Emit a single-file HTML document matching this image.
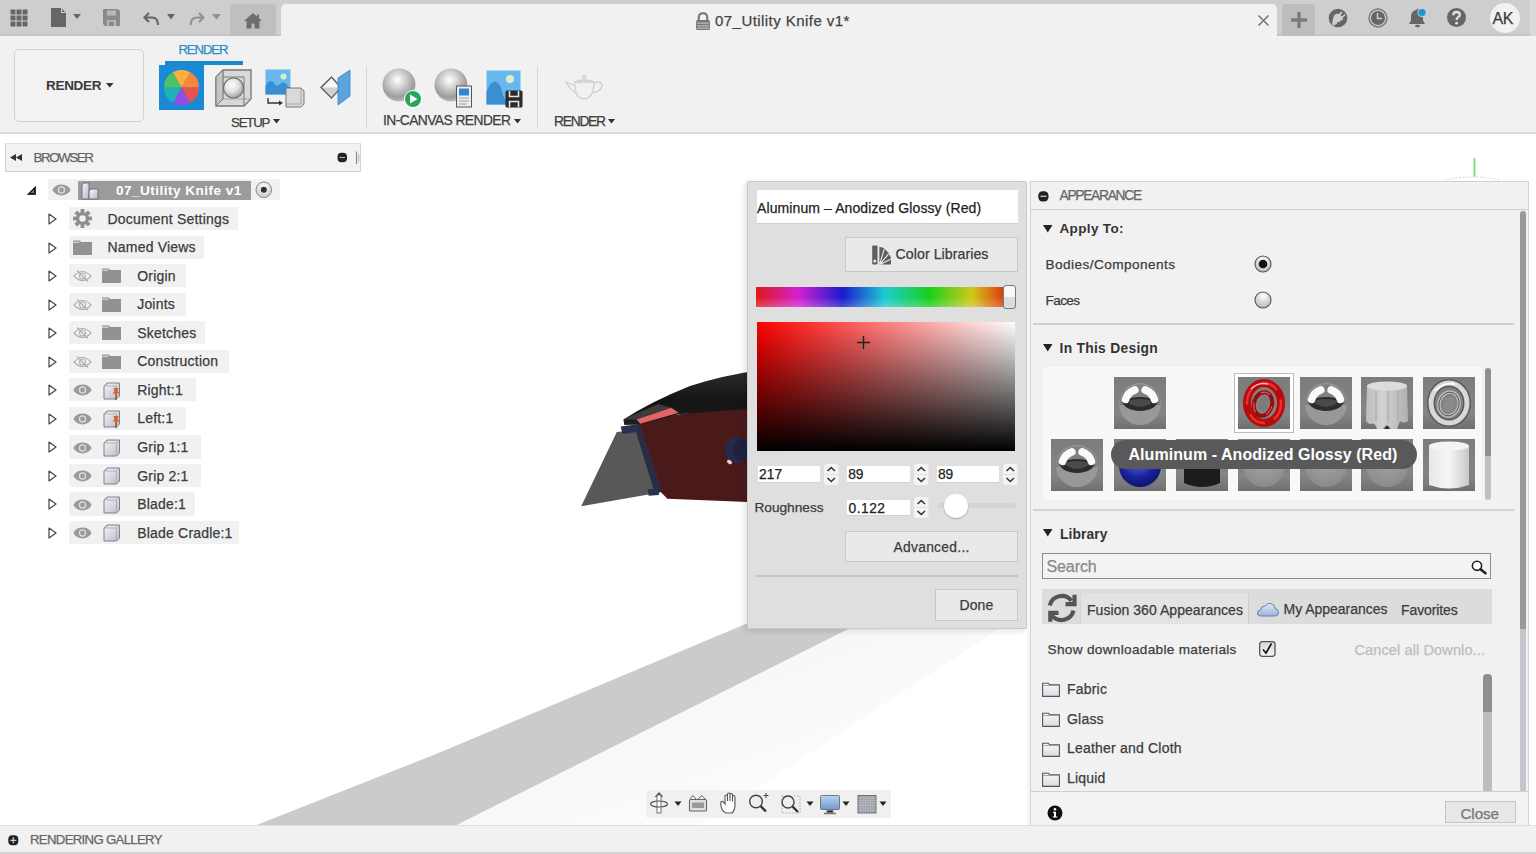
<!DOCTYPE html>
<html><head><meta charset="utf-8">
<style>
*{box-sizing:border-box}
html,body{margin:0;padding:0;width:1536px;height:854px;overflow:hidden;background:#fff;font-family:"Liberation Sans",sans-serif;}
.a{position:absolute}
.t{position:absolute;white-space:nowrap;line-height:1;color:#3c3c3c;-webkit-text-stroke:0.25px currentColor}
svg{position:absolute;overflow:visible}
.t[style*="bold"]{-webkit-text-stroke:0}
</style></head><body>

<!-- ===== TOP BAR ===== -->
<div class="a" style="left:0;top:0;width:1536px;height:36px;background:#cecece;border-bottom:2px solid #c4c4c4"></div>
<div class="a" style="left:1530px;top:0;width:6px;height:36px;background:#d9d9d9"></div>
<!-- home btn -->
<div class="a" style="left:230px;top:4px;width:46px;height:32px;background:#bfbfbf;border-radius:4px 4px 0 0"></div>
<!-- doc tab -->
<div class="a" style="left:281px;top:4px;width:996px;height:34px;background:#f1f1f1;border-radius:5px 5px 0 0"></div>
<!-- plus btn -->
<div class="a" style="left:1282px;top:4px;width:33px;height:32px;background:#bdbdbd;border-radius:4px 4px 0 0"></div>


<!-- grid icon -->
<svg style="left:10px;top:9px" width="18" height="18" viewBox="0 0 18 18"><g fill="#666">
<rect x="0.5" y="0.5" width="5" height="5"/><rect x="6.5" y="0.5" width="5" height="5"/><rect x="12.5" y="0.5" width="5" height="5"/>
<rect x="0.5" y="6.5" width="5" height="5"/><rect x="6.5" y="6.5" width="5" height="5"/><rect x="12.5" y="6.5" width="5" height="5"/>
<rect x="0.5" y="12.5" width="5" height="5"/><rect x="6.5" y="12.5" width="5" height="5"/><rect x="12.5" y="12.5" width="5" height="5"/></g></svg>
<!-- file icon -->
<svg style="left:51px;top:8px" width="32" height="20" viewBox="0 0 32 20"><path d="M0 0H10L15 5V19H0Z" fill="#666"/><path d="M10 0V5H15" fill="#cfcfcf"/><path d="M11 1V4H14Z" fill="#666"/><path d="M22 6H30L26 11Z" fill="#666"/></svg>
<!-- save icon -->
<svg style="left:103px;top:9px" width="18" height="18" viewBox="0 0 18 18"><path d="M0 1Q0 0 1 0H15L17 2V17H2L0 15Z" fill="#8a8a8a"/><rect x="4" y="1.5" width="9" height="5" fill="#b9b9b9"/><rect x="4" y="11" width="9" height="6" fill="#b9b9b9"/><rect x="6" y="12.5" width="5" height="4.5" fill="#8a8a8a"/></svg>
<!-- undo -->
<svg style="left:143px;top:11px" width="34" height="16" viewBox="0 0 34 16"><path d="M6 2L1.5 6.5L6 11" fill="none" stroke="#666" stroke-width="2.2"/><path d="M2 6.5H9Q15 6.5 15 14" fill="none" stroke="#666" stroke-width="2.2"/><path d="M24 3H32L28 8.5Z" fill="#666"/></svg>
<!-- redo -->
<svg style="left:189px;top:11px" width="34" height="16" viewBox="0 0 34 16"><path d="M10 2L14.5 6.5L10 11" fill="none" stroke="#8f8f8f" stroke-width="2"/><path d="M14 6.5H8Q2 6.5 1.5 14" fill="none" stroke="#8f8f8f" stroke-width="2"/><path d="M23 3H32L27.5 8.5Z" fill="#8f8f8f"/></svg>
<!-- home icon -->
<svg style="left:244px;top:13px" width="18" height="16" viewBox="0 0 18 16"><path d="M9 0L0 8H2.5V15.5H7.5V10.5H10.5V15.5H15.5V8H18L15 5.3V1.5H13V3.6Z" fill="#6e6e6e"/></svg>
<!-- lock -->
<svg style="left:694.5px;top:11.5px" width="16" height="18" viewBox="0 0 15 17" preserveAspectRatio="none"><path d="M3.5 8V5.5Q3.5 1.2 7.5 1.2Q11.5 1.2 11.5 5.5V8" fill="none" stroke="#777" stroke-width="2"/><rect x="1" y="7.5" width="13" height="9.5" rx="1.5" fill="#777"/><g stroke="#c8c8c8" stroke-width="1"><line x1="2" y1="10.5" x2="13" y2="10.5"/><line x1="2" y1="13" x2="13" y2="13"/><line x1="2" y1="15.2" x2="13" y2="15.2"/></g></svg>
<div class="t" style="left:715px;top:12.5px;font-size:15px;color:#444;letter-spacing:0.45px">07_Utility Knife v1*</div>
<!-- close x -->
<svg style="left:1258px;top:15px" width="11" height="11" viewBox="0 0 11 11"><path d="M0.5 0.5L10.5 10.5M10.5 0.5L0.5 10.5" stroke="#777" stroke-width="1.6"/></svg>
<!-- plus -->
<svg style="left:1291px;top:12px" width="16" height="16" viewBox="0 0 16 16"><path d="M8 0V16M0 8H16" stroke="#7b7b7b" stroke-width="3.4"/></svg>
<!-- extension icon -->
<svg style="left:1328px;top:8px" width="20" height="20" viewBox="0 0 20 20"><circle cx="10" cy="10" r="9.3" fill="#666"/><path d="M5 11Q6 5 11 6L13 3.5L14.5 4.5L12.5 7L14 8.5L16.5 6L17.5 7.2L15 9.5Q15.5 14 9.5 15.5L5.5 17.5L4 16Z" fill="#cecece"/><path d="M9 15Q13 15 14 12" stroke="#666" fill="none" stroke-width="1.4"/></svg>
<!-- clock -->
<svg style="left:1368px;top:8px" width="20" height="20" viewBox="0 0 20 20"><circle cx="10" cy="10" r="9" fill="none" stroke="#777" stroke-width="1.4"/><circle cx="10" cy="10" r="7" fill="#666"/><path d="M9.5 5V10.5H14" fill="none" stroke="#d0d0d0" stroke-width="1.4"/></svg>
<!-- bell -->
<svg style="left:1409px;top:8px" width="20" height="20" viewBox="0 0 20 20"><path d="M8 1.5Q8 0.5 8.8 0.5Q9.6 0.5 9.6 1.5Q14 3 14 8V12.5L16 16H0L2 12.5V8Q2 3 8 1.5Z" fill="#666"/><ellipse cx="8.5" cy="18" rx="2.5" ry="1.3" fill="#666"/><circle cx="13" cy="4.5" r="4.5" fill="#cecece"/><circle cx="13" cy="4.5" r="3.6" fill="#1f96d8"/></svg>
<!-- help -->
<svg style="left:1447px;top:8px" width="20" height="20" viewBox="0 0 20 20"><circle cx="9.5" cy="9.5" r="9.5" fill="#666"/><path d="M6.3 7.3Q6.3 4 9.6 4Q12.8 4 12.8 6.8Q12.8 8.5 10.8 9.5Q9.6 10.2 9.6 12" fill="none" stroke="#e0e0e0" stroke-width="2.3"/><circle cx="9.6" cy="15.2" r="1.4" fill="#e0e0e0"/></svg>
<!-- avatar -->
<div class="a" style="left:1490px;top:3px;width:30px;height:30px;border-radius:50%;background:#f2f2f2"></div>
<div class="t" style="left:1492.5px;top:10.5px;font-size:16px;color:#3a3a3a;letter-spacing:-0.4px">AK</div>

<!-- ===== TOOLBAR ===== -->
<div class="a" style="left:0;top:36px;width:1536px;height:98px;background:#f1f1f1;border-bottom:2px solid #dcdcdc"></div>


<!-- RENDER box -->
<div class="a" style="left:14px;top:49px;width:130px;height:73px;border:1.5px solid #d2d2d2;border-radius:5px;background:#f2f2f2"></div>
<div class="t" style="left:46px;top:78.5px;font-size:13.5px;font-weight:bold;color:#3a3a3a;letter-spacing:-0.3px">RENDER</div>
<svg style="left:106px;top:83px" width="8" height="5" viewBox="0 0 8 5"><path d="M0 0H7.5L3.75 4.5Z" fill="#333"/></svg>
<!-- RENDER tab label -->
<div class="t" style="left:178.5px;top:43.2px;font-size:13.2px;color:#2b8fc6;letter-spacing:-1.15px">RENDER</div>
<div class="a" style="left:165px;top:61px;width:78px;height:3.5px;background:#1b88cc"></div>
<!-- color wheel btn -->
<div class="a" style="left:159px;top:65px;width:45px;height:45px;background:#1a8ad4"></div>
<svg style="left:163px;top:69px" width="37" height="37" viewBox="-18.5 -18.5 37 37">
<path d="M0 0L-8.75 -15.16A17.5 17.5 0 0 1 8.75 -15.16Z" fill="#fbb03b"/>
<path d="M0 0L8.75 -15.16A17.5 17.5 0 0 1 17.5 0Z" fill="#f7873a"/>
<path d="M0 0L17.5 0A17.5 17.5 0 0 1 8.75 15.16Z" fill="#e8524a"/>
<path d="M0 0L8.75 15.16A17.5 17.5 0 0 1 -8.75 15.16Z" fill="#8d4fe6"/>
<path d="M0 0L-8.75 15.16A17.5 17.5 0 0 1 -17.5 0Z" fill="#1fb3b8"/>
<path d="M0 0L-17.5 0A17.5 17.5 0 0 1 -8.75 -15.16Z" fill="#4fc063"/>
</svg>
<!-- box w/ sphere -->
<svg style="left:215px;top:69px" width="37" height="38" viewBox="0 0 37 38">
<defs><radialGradient id="sph" cx="0.4" cy="0.35" r="0.7"><stop offset="0" stop-color="#ffffff"/><stop offset="0.5" stop-color="#e0e0e0"/><stop offset="1" stop-color="#9a9a9a"/></radialGradient></defs>
<path d="M1 8L8 1H36V30L29 37H1Z" fill="#d8d8d8" stroke="#777" stroke-width="1.3"/>
<path d="M8 1V30H36M1 37L8 30" fill="none" stroke="#999" stroke-width="0.8"/>
<path d="M1 8H29V37" fill="none" stroke="#777" stroke-width="1"/>
<path d="M1 8L8 1V30L1 37Z" fill="#c4c4c4" stroke="#777" stroke-width="1"/>
<circle cx="18.5" cy="19" r="10" fill="url(#sph)" stroke="#666" stroke-width="1.1"/>
</svg>
<!-- image + cube -->
<svg style="left:265px;top:69px" width="40" height="39" viewBox="0 0 40 39">
<rect x="0.5" y="0.5" width="25" height="25" fill="#68b8ef"/>
<path d="M0.5 25.5V17Q5 9 9 14Q12 19 15 15Q19 11 22 16Q24 19 25.5 18V25.5Z" fill="#3a8fd0"/>
<circle cx="18.5" cy="7.5" r="3" fill="#d9ecd0"/>
<path d="M21 19H36L39 22V35L36 38H21Z" fill="#dadada" stroke="#777" stroke-width="1"/>
<path d="M36 19V35H21" fill="none" stroke="#999" stroke-width="0.8"/>
<path d="M3 29V34H15" fill="none" stroke="#333" stroke-width="1.4"/><path d="M14 31.5L18 34L14 36.5Z" fill="#333"/>
</svg>
<!-- diamond + plane -->
<svg style="left:320px;top:69px" width="31" height="38" viewBox="0 0 31 38">
<path d="M1 18.5L11.5 8L21 18.5L11.5 29Z" fill="#f8f8f8" stroke="#666" stroke-width="1.2"/>
<path d="M1 18.5H21L11.5 29Z" fill="#d0d0d0"/>
<path d="M1 18.5L11.5 8L21 18.5L11.5 29Z" fill="none" stroke="#666" stroke-width="1.2"/>
<path d="M18 9L30 1V27L18 36Z" fill="#5aa4e0" stroke="#3a84c4" stroke-width="0.8"/>
</svg>
<div class="t" style="left:231px;top:115.5px;font-size:13.2px;color:#3f3f3f;letter-spacing:-1.15px">SETUP</div>
<svg style="left:273px;top:119px" width="8" height="5" viewBox="0 0 8 5"><path d="M0 0H7L3.5 4.5Z" fill="#333"/></svg>
<div class="a" style="left:366px;top:67px;width:1px;height:61px;background:#d6d6d6"></div>
<!-- in-canvas spheres -->
<svg style="left:382px;top:68px" width="42" height="42" viewBox="0 0 42 42">
<defs><radialGradient id="sp2" cx="0.45" cy="0.35" r="0.65"><stop offset="0" stop-color="#ffffff"/><stop offset="0.35" stop-color="#d5d5d5"/><stop offset="0.8" stop-color="#9c9c9c"/><stop offset="1" stop-color="#bdbdbd"/></radialGradient></defs>
<circle cx="17" cy="17" r="16.5" fill="url(#sp2)"/>
<circle cx="31" cy="31" r="9" fill="#fff"/><circle cx="31" cy="31" r="8" fill="#27a55a"/><path d="M28 26.5L35.5 31L28 35.5Z" fill="#fff"/>
</svg>
<svg style="left:434px;top:68px" width="42" height="42" viewBox="0 0 42 42">
<circle cx="17" cy="17" r="16.5" fill="url(#sp2)"/>
<rect x="22.5" y="18" width="15" height="21" fill="#eee" stroke="#555" stroke-width="1"/>
<rect x="25" y="20.5" width="10" height="7" fill="#2e86d6"/>
<path d="M25 30H35M25 33H35M25 36H33" stroke="#888" stroke-width="0.8"/>
</svg>
<svg style="left:486px;top:70px" width="38" height="38" viewBox="0 0 38 38">
<rect x="0.5" y="0.5" width="34" height="34" fill="#68b8ef"/>
<path d="M0.5 34.5V22Q5 10 10 12Q15 14 17 25Q18 30 22 30V34.5Z" fill="#3a8fd0"/>
<circle cx="24" cy="9" r="4" fill="#dfefc8"/>
<rect x="19.5" y="20.5" width="17" height="17" rx="1.5" fill="#2b2b2b"/>
<path d="M23.5 21V26.5H32.5V21" fill="none" stroke="#e6e6e6" stroke-width="1.6"/>
<path d="M23.5 37V31.5H32.5V37" fill="none" stroke="#e6e6e6" stroke-width="1.6"/>
</svg>
<div class="t" style="left:383px;top:114.3px;font-size:13.8px;color:#3f3f3f;letter-spacing:-0.55px">IN-CANVAS RENDER</div>
<svg style="left:514px;top:119px" width="8" height="5" viewBox="0 0 8 5"><path d="M0 0H7L3.5 4.5Z" fill="#333"/></svg>
<div class="a" style="left:537px;top:67px;width:1px;height:61px;background:#d6d6d6"></div>
<!-- teapot -->
<svg style="left:565px;top:74px" width="40" height="26" viewBox="0 0 40 26">
<g fill="none" stroke="#cfcfcf" stroke-width="1.3">
<path d="M10 8Q9 24 19 25Q29 24 29 8Z"/><path d="M10 8Q19 4 29 8"/><circle cx="19.5" cy="3" r="1.5"/>
<path d="M29 9Q37 6 37 12Q36 17 28 19"/><path d="M10 12Q3 9 1 8Q5 16 11 19"/></g></svg>
<div class="t" style="left:554px;top:114.5px;font-size:13.8px;color:#3f3f3f;letter-spacing:-1.25px">RENDER</div>
<svg style="left:608px;top:119px" width="8" height="5" viewBox="0 0 8 5"><path d="M0 0H7L3.5 4.5Z" fill="#333"/></svg>



<!-- ===== CANVAS ===== -->
<svg style="left:0;top:0" width="1536" height="854" viewBox="0 0 1536 854">
<defs>
<linearGradient id="shfade" x1="0" y1="0" x2="1" y2="0.3"><stop offset="0" stop-color="#f4f4f4" stop-opacity="0"/><stop offset="1" stop-color="#f2f2f2" stop-opacity="1"/></linearGradient>
</defs>
<!-- faint wide shadow -->
<linearGradient id="fsh" x1="0" y1="0" x2="1" y2="1"><stop offset="0" stop-color="#f3f3f3"/><stop offset="1" stop-color="#ffffff"/></linearGradient><path d="M456.7 825L848.3 629L1000 628L700 825Z" fill="url(#fsh)"/>
<path d="M256.7 825L436 754L748 623L900 560L1000 520L900 600L848.3 629L456.7 825Z" fill="#cbcbcb"/>
</svg>
<!-- knife -->
<svg style="left:0;top:0" width="760" height="560" viewBox="0 0 760 560">
<defs>
<linearGradient id="grip" x1="0" y1="0" x2="0" y2="1"><stop offset="0" stop-color="#2e2e2e"/><stop offset="0.55" stop-color="#141414"/><stop offset="1" stop-color="#1c1c1c"/></linearGradient>
</defs>
<path d="M581.2 506.2L616.8 432.1L636 430L657 493Z" fill="#585858"/>
<path d="M636 421L760 402V502.4L667.4 498.7L660 491.2Z" fill="#4a1a1a"/>
<path d="M623.4 419.6Q650 402 690 386Q720 376 760 370V408L678.7 414.3L640.3 424.5L624.3 425Z" fill="url(#grip)"/>
<path d="M623.4 419.6L658 404L671.2 407.8L636.5 419.6Z" fill="#3c3c3c"/>
<path d="M636.5 419.6L671.2 407.8L678.7 412.8L640.3 423.7Z" fill="#e26464"/>
<path d="M633.7 424.6L640.3 424.6L661.8 491.2L655.3 494.9Z" fill="#2a2c46"/>
<path d="M620.6 426.5L635.6 424.6L637.5 432.1L622.5 434Z" fill="#2c3050"/>
<path d="M647.8 489.3L658 488.4L659 494.9L648.7 495.8Z" fill="#2c3050"/>
<ellipse cx="737" cy="450" rx="12" ry="13" fill="#262a4a"/>
<ellipse cx="741" cy="450" rx="8" ry="11" fill="#1e2240"/>
<ellipse cx="729.5" cy="462" rx="2.8" ry="1.8" fill="#f0d0d0" transform="rotate(35 729.5 462)"/>
</svg>
<!-- axis gizmo -->
<svg style="left:1440px;top:150px" width="60" height="35" viewBox="0 0 60 35">
<path d="M34.5 8V27" stroke="#7ee07e" stroke-width="2"/>
<path d="M5 30Q34 24 60 30" fill="none" stroke="#ddd" stroke-width="1.2" stroke-dasharray="2 1.5"/>
</svg>
<!-- nav bar -->
<div class="a" style="left:646.4px;top:789.7px;width:244.3px;height:28.1px;background:#f0f0f0;border-radius:2px"></div>
<svg style="left:646px;top:789px" width="245" height="29" viewBox="0 0 245 29">
<defs><linearGradient id="mon" x1="0" y1="0" x2="0" y2="1"><stop offset="0" stop-color="#bcd4f0"/><stop offset="1" stop-color="#6e98d0"/></linearGradient></defs>
<!-- orbit -->
<path d="M13 4V24" stroke="#555" stroke-width="2.2"/><path d="M9.5 8L13 4L16.5 8" fill="none" stroke="#555" stroke-width="1.4"/>
<rect x="11" y="6" width="4" height="18" fill="#fff" stroke="#666" stroke-width="0.9"/>
<ellipse cx="13" cy="15" rx="8.5" ry="3" fill="none" stroke="#555" stroke-width="1.2"/>
<path d="M28.5 12.5H35.5L32 17Z" fill="#222"/>
<!-- camera/film -->
<rect x="43.5" y="10.5" width="17" height="11.5" rx="1" fill="#e0e0e0" stroke="#666" stroke-width="1.1"/>
<rect x="46" y="13.5" width="12" height="5.5" fill="#999"/>
<path d="M44 10L47 6.5L50 10M52 10L56 6.5L59 10" fill="none" stroke="#666" stroke-width="1"/>
<!-- hand -->
<path d="M77 22Q74 17 75 13Q76 11.5 77.5 13L79 15V7.5Q79 6 80.3 6Q81.5 6 81.5 7.5V12V5.5Q81.5 4 82.8 4Q84 4 84 5.5V12V6Q84 4.5 85.3 4.5Q86.5 4.5 86.5 6V12.5V8Q86.5 6.5 87.7 6.5Q89 6.5 89 8V16Q89 21 86 24H80Z" fill="#fff" stroke="#555" stroke-width="1.1"/>
<!-- zoom + -->
<circle cx="110" cy="12.5" r="6.3" fill="#e8f0f4" stroke="#444" stroke-width="1.4"/><path d="M114.5 17L120 22.5" stroke="#333" stroke-width="2.4"/><path d="M120 4V9M117.5 6.5H122.5" stroke="#444" stroke-width="1"/>
<!-- zoom window -->
<path d="M136 7H154V24H136Z" fill="none" stroke="#999" stroke-width="0.8" stroke-dasharray="1.5 1.5"/>
<circle cx="142" cy="13" r="6" fill="#e8f0f4" stroke="#444" stroke-width="1.4"/><path d="M146.5 17.5L152 23" stroke="#333" stroke-width="2.4"/>
<path d="M160.5 12.5H167.5L164 17Z" fill="#222"/>
<!-- monitor -->
<rect x="174.5" y="6.5" width="19" height="14" rx="1" fill="url(#mon)" stroke="#777" stroke-width="1"/><path d="M181 21.5V23.5H187V21.5M178 24.5H190" stroke="#777" stroke-width="1.3"/>
<path d="M196.5 12.5H203.5L200 17Z" fill="#222"/>
<!-- grid -->
<rect x="212" y="6.5" width="18" height="17.5" fill="#9aa0a8" stroke="#666" stroke-width="0.9"/>
<path d="M214.5 7V24M217 7V24M219.5 7V24M222 7V24M224.5 7V24M227 7V24M212 9H230M212 11.5H230M212 14H230M212 16.5H230M212 19H230M212 21.5H230" stroke="#c0c4cc" stroke-width="0.5"/>
<path d="M233.5 12.5H240.5L237 17Z" fill="#222"/>
</svg>
<!-- bottom bar -->

<!-- ===== BROWSER ===== -->
<div class="a" style="left:5px;top:143px;width:356px;height:29px;background:#f2f2f2;border:1px solid #d4d4d4;border-top-color:#e2e2e2"></div>
<svg style="left:10px;top:154px" width="13" height="7" viewBox="0 0 13 7"><path d="M0 3.5L6 0V7Z M6 3.5L12 0V7Z" fill="#333"/></svg>
<div class="t" style="left:33.5px;top:150.5px;font-size:13.4px;color:#666;letter-spacing:-1.45px">BROWSER</div>
<svg style="left:337px;top:152px" width="24" height="14" viewBox="0 0 24 14"><rect x="0.5" y="0.8" width="9.5" height="9.5" rx="4" fill="#222"/><rect x="2.5" y="4.9" width="5.5" height="1.2" fill="#aaa"/><path d="M19.5 -0.5V12" stroke="#888" stroke-width="1.1"/><path d="M21.7 2V9.5" stroke="#aaa" stroke-width="0.9"/></svg>
<!-- root row -->
<svg style="left:27px;top:186px" width="9" height="9" viewBox="0 0 9 9"><path d="M8.5 0.5V8.5H0.5Z" fill="#1a1a1a" stroke="#1a1a1a" stroke-width="0.8" stroke-linejoin="round"/><path d="M7 3.5V7H3.5Z" fill="#777"/></svg>
<div class="a" style="left:48px;top:178.8px;width:232px;height:21.5px;background:#f1f1f1"></div>
<div class="a" style="left:77.5px;top:181px;width:173px;height:18.5px;background:#9b9b9b"></div>


<svg width="0" height="0" style="position:absolute">
<defs>
<symbol id="tri" viewBox="0 0 9 12"><path d="M1 1L8 6L1 11Z" fill="none" stroke="#444" stroke-width="1.2" stroke-linejoin="round"/></symbol>
<symbol id="eye" viewBox="0 0 19 12"><path d="M0.3 6C4 -1.2 15 -1.2 18.7 6C15 13.2 4 13.2 0.3 6Z" fill="#9a9a9a"/><circle cx="9.5" cy="6" r="3.7" fill="#dedede"/><circle cx="9.5" cy="6" r="2.4" fill="#9a9a9a"/></symbol>
<symbol id="eyeoff" viewBox="0 0 19 12"><path d="M1 6Q9.5 -3 18 6Q9.5 15 1 6Z" fill="none" stroke="#b0b0b0" stroke-width="1.2"/><circle cx="9.5" cy="6" r="3" fill="none" stroke="#b0b0b0" stroke-width="1.1"/><path d="M4 0.5L15 11.5" stroke="#b0b0b0" stroke-width="1.3"/></symbol>
<symbol id="folder" viewBox="0 0 19 15"><path d="M0 0.5H7L8 2H19V15H0Z" fill="#8f8f8f"/><rect x="0" y="3" width="19" height="12" fill="#929292"/><path d="M0 2.2H6.5" stroke="#e8e8e8" stroke-width="1"/></symbol>
<symbol id="gear" viewBox="0 0 20 20"><g fill="#8f8f8f"><circle cx="10" cy="10" r="6.8"/>
<rect x="8" y="0" width="4" height="20"/><rect x="0" y="8" width="20" height="4"/><rect x="8" y="0" width="4" height="20" transform="rotate(45 10 10)"/><rect x="8" y="0" width="4" height="20" transform="rotate(-45 10 10)"/></g><circle cx="10" cy="10" r="3.4" fill="#f1f1f1"/></symbol>
<linearGradient id="cubeg" x1="0" y1="0" x2="1" y2="1"><stop offset="0" stop-color="#f4f6fa"/><stop offset="1" stop-color="#b8bcc6"/></linearGradient>
<symbol id="cube" viewBox="0 0 18 18"><path d="M1 4L4 1H16.5V14L13.5 17H1Z" fill="url(#cubeg)" stroke="#7e8088" stroke-width="1"/><path d="M4 1V4H1M4 4H13.5V17M13.5 4L16.5 1" fill="none" stroke="#a0a2aa" stroke-width="0.7"/></symbol>
<symbol id="cubepin" viewBox="0 0 18 18"><path d="M1 4L4 1H16.5V14L13.5 17H1Z" fill="url(#cubeg)" stroke="#7e8088" stroke-width="1"/><path d="M4 1V4H1M4 4H13.5V17" fill="none" stroke="#a0a2aa" stroke-width="0.7"/>
<path d="M10.5 6H15.5L14.5 9L16.5 11.5H9.5L11.5 9Z" fill="#d9622b"/><path d="M13 11.5V18" stroke="#8a3a1a" stroke-width="1.2"/></symbol>
</defs></svg>
<svg style="left:48px;top:213.0px" width="9" height="12"><use href="#tri"/></svg>
<div class="a" style="left:69.4px;top:207.0px;width:168.3px;height:23.4px;background:#f1f1f1"></div>
<svg style="left:72.5px;top:209.3px" width="19" height="19" viewBox="0 0 20 20"><use href="#gear" width="20" height="20"/></svg>
<div class="t" style="left:107.5px;top:211.8px;font-size:14px;color:#3c3c3c;letter-spacing:0.2px">Document Settings</div>
<svg style="left:48px;top:241.5px" width="9" height="12"><use href="#tri"/></svg>
<div class="a" style="left:69.4px;top:235.5px;width:134.6px;height:23.4px;background:#f1f1f1"></div>
<svg style="left:72.7px;top:239.8px" width="19" height="15" viewBox="0 0 19 15"><use href="#folder" width="19" height="15"/></svg>
<div class="t" style="left:107.5px;top:240.3px;font-size:14px;color:#3c3c3c;letter-spacing:0.2px">Named Views</div>
<svg style="left:48px;top:270.0px" width="9" height="12"><use href="#tri"/></svg>
<div class="a" style="left:69.4px;top:264.0px;width:117.0px;height:23.4px;background:#f1f1f1"></div>
<svg style="left:73px;top:270.0px" width="19" height="12" viewBox="0 0 19 12"><use href="#eyeoff" width="19" height="12"/></svg>
<svg style="left:102.3px;top:268.3px" width="19" height="15" viewBox="0 0 19 15"><use href="#folder" width="19" height="15"/></svg>
<div class="t" style="left:137.2px;top:268.8px;font-size:14px;color:#3c3c3c;letter-spacing:0.2px">Origin</div>
<svg style="left:48px;top:298.6px" width="9" height="12"><use href="#tri"/></svg>
<div class="a" style="left:69.4px;top:292.6px;width:117.0px;height:23.4px;background:#f1f1f1"></div>
<svg style="left:73px;top:298.6px" width="19" height="12" viewBox="0 0 19 12"><use href="#eyeoff" width="19" height="12"/></svg>
<svg style="left:102.3px;top:296.9px" width="19" height="15" viewBox="0 0 19 15"><use href="#folder" width="19" height="15"/></svg>
<div class="t" style="left:137.2px;top:297.4px;font-size:14px;color:#3c3c3c;letter-spacing:0.2px">Joints</div>
<svg style="left:48px;top:327.1px" width="9" height="12"><use href="#tri"/></svg>
<div class="a" style="left:69.4px;top:321.1px;width:135.6px;height:23.4px;background:#f1f1f1"></div>
<svg style="left:73px;top:327.1px" width="19" height="12" viewBox="0 0 19 12"><use href="#eyeoff" width="19" height="12"/></svg>
<svg style="left:102.3px;top:325.4px" width="19" height="15" viewBox="0 0 19 15"><use href="#folder" width="19" height="15"/></svg>
<div class="t" style="left:137.2px;top:325.9px;font-size:14px;color:#3c3c3c;letter-spacing:0.2px">Sketches</div>
<svg style="left:48px;top:355.6px" width="9" height="12"><use href="#tri"/></svg>
<div class="a" style="left:69.4px;top:349.6px;width:159.6px;height:23.4px;background:#f1f1f1"></div>
<svg style="left:73px;top:355.6px" width="19" height="12" viewBox="0 0 19 12"><use href="#eyeoff" width="19" height="12"/></svg>
<svg style="left:102.3px;top:353.9px" width="19" height="15" viewBox="0 0 19 15"><use href="#folder" width="19" height="15"/></svg>
<div class="t" style="left:137.2px;top:354.4px;font-size:14px;color:#3c3c3c;letter-spacing:0.2px">Construction</div>
<svg style="left:48px;top:384.1px" width="9" height="12"><use href="#tri"/></svg>
<div class="a" style="left:69.4px;top:378.1px;width:126.3px;height:23.4px;background:#f1f1f1"></div>
<svg style="left:72.8px;top:384.4px" width="19" height="12" viewBox="0 0 19 12"><use href="#eye" width="19" height="12"/></svg>
<svg style="left:103px;top:381.5px" width="18" height="18" viewBox="0 0 18 18"><use href="#cubepin" width="18" height="18"/></svg>
<div class="t" style="left:137.2px;top:382.9px;font-size:14px;color:#3c3c3c;letter-spacing:0.2px">Right:1</div>
<svg style="left:48px;top:412.6px" width="9" height="12"><use href="#tri"/></svg>
<div class="a" style="left:69.4px;top:406.6px;width:116.6px;height:23.4px;background:#f1f1f1"></div>
<svg style="left:72.8px;top:412.9px" width="19" height="12" viewBox="0 0 19 12"><use href="#eye" width="19" height="12"/></svg>
<svg style="left:103px;top:410.0px" width="18" height="18" viewBox="0 0 18 18"><use href="#cubepin" width="18" height="18"/></svg>
<div class="t" style="left:137.2px;top:411.4px;font-size:14px;color:#3c3c3c;letter-spacing:0.2px">Left:1</div>
<svg style="left:48px;top:441.2px" width="9" height="12"><use href="#tri"/></svg>
<div class="a" style="left:69.4px;top:435.2px;width:131.6px;height:23.4px;background:#f1f1f1"></div>
<svg style="left:72.8px;top:441.5px" width="19" height="12" viewBox="0 0 19 12"><use href="#eye" width="19" height="12"/></svg>
<svg style="left:103px;top:438.6px" width="18" height="18" viewBox="0 0 18 18"><use href="#cube" width="18" height="18"/></svg>
<div class="t" style="left:137.2px;top:440.0px;font-size:14px;color:#3c3c3c;letter-spacing:0.2px">Grip 1:1</div>
<svg style="left:48px;top:469.7px" width="9" height="12"><use href="#tri"/></svg>
<div class="a" style="left:69.4px;top:463.7px;width:131.6px;height:23.4px;background:#f1f1f1"></div>
<svg style="left:72.8px;top:470.0px" width="19" height="12" viewBox="0 0 19 12"><use href="#eye" width="19" height="12"/></svg>
<svg style="left:103px;top:467.1px" width="18" height="18" viewBox="0 0 18 18"><use href="#cube" width="18" height="18"/></svg>
<div class="t" style="left:137.2px;top:468.5px;font-size:14px;color:#3c3c3c;letter-spacing:0.2px">Grip 2:1</div>
<svg style="left:48px;top:498.2px" width="9" height="12"><use href="#tri"/></svg>
<div class="a" style="left:69.4px;top:492.2px;width:126.0px;height:23.4px;background:#f1f1f1"></div>
<svg style="left:72.8px;top:498.5px" width="19" height="12" viewBox="0 0 19 12"><use href="#eye" width="19" height="12"/></svg>
<svg style="left:103px;top:495.6px" width="18" height="18" viewBox="0 0 18 18"><use href="#cube" width="18" height="18"/></svg>
<div class="t" style="left:137.2px;top:497.0px;font-size:14px;color:#3c3c3c;letter-spacing:0.2px">Blade:1</div>
<svg style="left:48px;top:526.7px" width="9" height="12"><use href="#tri"/></svg>
<div class="a" style="left:69.4px;top:520.7px;width:169.3px;height:23.4px;background:#f1f1f1"></div>
<svg style="left:72.8px;top:527.0px" width="19" height="12" viewBox="0 0 19 12"><use href="#eye" width="19" height="12"/></svg>
<svg style="left:103px;top:524.1px" width="18" height="18" viewBox="0 0 18 18"><use href="#cube" width="18" height="18"/></svg>
<div class="t" style="left:137.2px;top:525.5px;font-size:14px;color:#3c3c3c;letter-spacing:0.2px">Blade Cradle:1</div>
<svg style="left:51.5px;top:184.3px" width="19" height="12" viewBox="0 0 19 12"><use href="#eye" width="19" height="12"/></svg>
<svg style="left:81px;top:181.5px" width="19" height="18" viewBox="0 0 19 18"><path d="M1 3L3 1H8V17H1Z" fill="url(#cubeg)" stroke="#6e7078" stroke-width="1"/><path d="M8 9L10 7H17V17H8Z" fill="url(#cubeg)" stroke="#6e7078" stroke-width="1"/></svg>
<div class="t" style="left:116px;top:183.6px;font-size:13.6px;font-weight:bold;color:#fff;letter-spacing:0.45px">07_Utility Knife v1</div>
<svg style="left:255px;top:181px" width="18" height="18" viewBox="0 0 18 18"><defs><radialGradient id="rad" cx="0.5" cy="0.3" r="0.7"><stop offset="0" stop-color="#fff"/><stop offset="1" stop-color="#c8c8c8"/></radialGradient></defs><circle cx="8.8" cy="8.8" r="7.8" fill="url(#rad)" stroke="#888" stroke-width="1"/><circle cx="8.8" cy="8.8" r="3" fill="#333"/></svg>


<!-- ===== COLOR DIALOG ===== -->
<div class="a" style="left:747px;top:180.5px;width:280px;height:448px;background:#dfdfdf;border:1.5px solid #c9c9c9;border-radius:2px;box-shadow:-2px 2px 6px rgba(0,0,0,0.12)"></div>
<div class="a" style="left:756.5px;top:190.3px;width:261px;height:34px;background:#fff;border-bottom:1px solid #cfcfcf"></div>
<div class="t" style="left:757px;top:201.3px;font-size:14px;color:#222;letter-spacing:0.1px">Aluminum – Anodized Glossy (Red)</div>
<div class="a" style="left:845px;top:237px;width:173px;height:35px;background:#e9e9e9;border:1px solid #c8c8c8"></div>
<svg style="left:872px;top:244.6px" width="20" height="20" viewBox="0 0 20 20"><rect x="0.2" y="0.6" width="5.3" height="18.8" rx="0.8" fill="#5e5e5e"/><circle cx="2.8" cy="16" r="1.5" fill="#e9e9e9"/><path d="M7.4 19.4V1.8L11.6 3L16.2 7.6L19 12.8V19.4Z" fill="#5e5e5e"/><path d="M7.6 19.6L12.2 4.2M7.6 19.6L16.6 8.8M7.6 19.6L19.4 14" stroke="#e9e9e9" stroke-width="1.1"/><path d="M7 17.5Q9.5 16.5 10.5 19.6" fill="none" stroke="#e9e9e9" stroke-width="1"/></svg>
<div class="t" style="left:895.5px;top:246.7px;font-size:14.2px;color:#3c3c3c;letter-spacing:0.05px">Color Libraries</div>
<!-- hue bar -->
<div class="a" style="left:755.5px;top:286.5px;width:248px;height:20px;background:linear-gradient(90deg,#e01818 0%,#d51fd0 17%,#1a1ad0 35%,#1ccbd2 52%,#1ad01a 70%,#d0c81a 87%,#e03a10 100%)"></div>
<div class="a" style="left:755.5px;top:296.5px;width:248px;height:10px;background:linear-gradient(180deg,rgba(255,255,255,0),rgba(255,255,255,0.22))"></div>
<div class="a" style="left:1003px;top:284.5px;width:13px;height:24.5px;background:linear-gradient(180deg,#f8f8f8 50%,#dcdcdc 50%);border:1px solid #777;border-radius:3px"></div>
<!-- SV box -->
<div class="a" style="left:756.5px;top:322px;width:258.5px;height:129px;background:linear-gradient(0deg,#000 0%,rgba(0,0,0,0) 100%),linear-gradient(90deg,#ff0000 0%,#ffffff 100%)"></div>
<svg style="left:857px;top:335.5px" width="13" height="13" viewBox="0 0 13 13"><path d="M6.5 0V13M0 6.5H13" stroke="#222" stroke-width="1.4"/></svg>
<div class="a" style="left:757.9px;top:465.8px;width:62.1px;height:17.6px;background:#fff;border-bottom:1px solid #d0d0d0"></div>
<div class="t" style="left:759.1px;top:467.8px;font-size:13.8px;color:#222">217</div>
<svg style="left:823.5px;top:464px" width="14.5" height="21" viewBox="0 0 14.5 21"><rect x="0" y="0" width="14.5" height="21" rx="3" fill="#f4f4f4"/><path d="M0 10.5H14.5" stroke="#ddd" stroke-width="0.8"/><path d="M3.5 7L7.25 3.5L11 7M3.5 14L7.25 17.5L11 14" fill="none" stroke="#333" stroke-width="1.6"/></svg>
<div class="a" style="left:847px;top:465.8px;width:63.3px;height:17.6px;background:#fff;border-bottom:1px solid #d0d0d0"></div>
<div class="t" style="left:848.2px;top:467.8px;font-size:13.8px;color:#222">89</div>
<svg style="left:913.8px;top:464px" width="14.5" height="21" viewBox="0 0 14.5 21"><rect x="0" y="0" width="14.5" height="21" rx="3" fill="#f4f4f4"/><path d="M0 10.5H14.5" stroke="#ddd" stroke-width="0.8"/><path d="M3.5 7L7.25 3.5L11 7M3.5 14L7.25 17.5L11 14" fill="none" stroke="#333" stroke-width="1.6"/></svg>
<div class="a" style="left:936.7px;top:465.8px;width:62.8px;height:17.6px;background:#fff;border-bottom:1px solid #d0d0d0"></div>
<div class="t" style="left:937.9px;top:467.8px;font-size:13.8px;color:#222">89</div>
<svg style="left:1003.0px;top:464px" width="14.5" height="21" viewBox="0 0 14.5 21"><rect x="0" y="0" width="14.5" height="21" rx="3" fill="#f4f4f4"/><path d="M0 10.5H14.5" stroke="#ddd" stroke-width="0.8"/><path d="M3.5 7L7.25 3.5L11 7M3.5 14L7.25 17.5L11 14" fill="none" stroke="#333" stroke-width="1.6"/></svg>

<div class="t" style="left:754.4px;top:501px;font-size:13.7px;color:#3c3c3c;letter-spacing:0.0px">Roughness</div>
<div class="a" style="left:847px;top:499.8px;width:63.3px;height:16.4px;background:#fff;border-bottom:1px solid #d0d0d0"></div>
<div class="t" style="left:848.5px;top:502px;font-size:13.8px;color:#222;letter-spacing:0.5px">0.122</div>
<svg style="left:913.8px;top:497.3px" width="14.5" height="21" viewBox="0 0 14.5 21"><rect x="0" y="0" width="14.5" height="21" rx="3" fill="#f4f4f4"/><path d="M0 10.5H14.5" stroke="#ddd" stroke-width="0.8"/><path d="M3.5 7L7.25 3.5L11 7M3.5 14L7.25 17.5L11 14" fill="none" stroke="#333" stroke-width="1.6"/></svg>
<div class="a" style="left:937.5px;top:502.5px;width:78.5px;height:5px;border-radius:2.5px;background:#d4d4d4"></div>
<div class="a" style="left:944px;top:494px;width:23.5px;height:23.5px;border-radius:50%;background:#fff;box-shadow:0 1px 1.5px rgba(0,0,0,0.25)"></div>
<div class="a" style="left:845px;top:530.7px;width:173.3px;height:31.3px;background:#e9e9e9;border:1px solid #c8c8c8"></div>
<div class="t" style="left:893.5px;top:540.5px;font-size:13.8px;color:#3c3c3c;letter-spacing:0.3px">Advanced...</div>
<div class="a" style="left:755.2px;top:575px;width:263px;height:1.5px;background:#c6c6c6"></div>
<div class="a" style="left:935.3px;top:589.3px;width:82.4px;height:31.3px;background:#e9e9e9;border:1px solid #c8c8c8"></div>
<div class="t" style="left:959.5px;top:598px;font-size:14px;color:#3c3c3c;letter-spacing:0.1px">Done</div>


<!-- ===== APPEARANCE PANEL ===== -->
<div class="a" style="left:1027px;top:181px;width:3px;height:652px;background:#f6f6f6"></div>
<div class="a" style="left:1030px;top:180.5px;width:499px;height:653px;background:#f1f1f1;border:1px solid #d2d2d2"></div>
<div class="a" style="left:1031px;top:208.5px;width:497px;height:1.5px;background:#d0d0d0"></div>
<svg style="left:1037.5px;top:190.5px" width="11" height="11" viewBox="0 0 11 11"><rect x="0.3" y="0.3" width="10.2" height="10.2" rx="4.2" fill="#222"/><rect x="2.5" y="4.6" width="6" height="1.4" fill="#bbb"/></svg>
<div class="t" style="left:1059.5px;top:189px;font-size:13.8px;color:#666;letter-spacing:-1.3px">APPEARANCE</div>
<!-- outer scrollbar -->
<div class="a" style="left:1519.5px;top:211px;width:6.5px;height:581px;border-radius:3px;background:linear-gradient(180deg,#9a9a9a 0%,#9a9a9a 72%,#c2c6ca 72%,#c2c6ca 100%)"></div>
<!-- Apply To -->
<svg style="left:1043px;top:225px" width="10" height="8" viewBox="0 0 10 8"><path d="M0 0H9.5L4.75 7.5Z" fill="#222"/></svg>
<div class="t" style="left:1059.5px;top:222.3px;font-size:13.5px;font-weight:bold;color:#333;letter-spacing:0.35px">Apply To:</div>
<div class="t" style="left:1045.5px;top:257.8px;font-size:13.6px;color:#3c3c3c;letter-spacing:0.45px">Bodies/Components</div>
<div class="t" style="left:1045.5px;top:293.5px;font-size:13.6px;color:#3c3c3c;letter-spacing:-0.6px">Faces</div>
<svg style="left:1254px;top:254.5px" width="18" height="18" viewBox="0 0 18 18"><defs><radialGradient id="rad2" cx="0.5" cy="0.25" r="0.75"><stop offset="0" stop-color="#fff"/><stop offset="1" stop-color="#b8b8b8"/></radialGradient></defs><circle cx="9" cy="9" r="8" fill="url(#rad2)" stroke="#555" stroke-width="1.1"/><circle cx="9" cy="9" r="4.3" fill="#111"/></svg>
<svg style="left:1254px;top:290.5px" width="18" height="18" viewBox="0 0 18 18"><circle cx="9" cy="9" r="8" fill="url(#rad2)" stroke="#555" stroke-width="1.1"/></svg>
<div class="a" style="left:1033px;top:323px;width:481px;height:1.5px;background:#cfcfcf"></div>
<!-- In This Design -->
<svg style="left:1043px;top:343.5px" width="10" height="8" viewBox="0 0 10 8"><path d="M0 0H9.5L4.75 7.5Z" fill="#222"/></svg>
<div class="t" style="left:1059.5px;top:341.7px;font-size:13.8px;font-weight:bold;color:#333;letter-spacing:0.3px">In This Design</div>
<div class="a" style="left:1042.5px;top:367px;width:439px;height:133px;background:#f8f8f8"></div>
<div class="a" style="left:1484.5px;top:368px;width:6px;height:132px;border-radius:3px;background:linear-gradient(180deg,#8f8f8f 0%,#8f8f8f 67%,#c0c0c0 67%)"></div>
<div class="a" style="left:1033px;top:509px;width:481px;height:1.5px;background:#d2d2d2"></div>


<svg width="0" height="0" style="position:absolute"><defs>
<linearGradient id="tbg" x1="0" y1="0" x2="0" y2="1"><stop offset="0" stop-color="#7c7c7c"/><stop offset="0.7" stop-color="#858585"/><stop offset="1" stop-color="#6f6f6f"/></linearGradient>
<linearGradient id="chr" x1="0" y1="0" x2="0" y2="1"><stop offset="0" stop-color="#6a6a6a"/><stop offset="0.45" stop-color="#333"/><stop offset="0.55" stop-color="#8a8a8a"/><stop offset="1" stop-color="#9d9d9d"/></linearGradient>
<radialGradient id="blu" cx="0.45" cy="0.35" r="0.7"><stop offset="0" stop-color="#6a78e0"/><stop offset="0.6" stop-color="#1a22a0"/><stop offset="1" stop-color="#0c1060"/></radialGradient>
<radialGradient id="gsph" cx="0.5" cy="0.3" r="0.7"><stop offset="0" stop-color="#a8a8a8"/><stop offset="1" stop-color="#8a8a8a"/></radialGradient>
<linearGradient id="wcyl" x1="0" y1="0" x2="1" y2="0"><stop offset="0" stop-color="#e8e8e8"/><stop offset="0.5" stop-color="#f6f6f6"/><stop offset="1" stop-color="#c8c8c8"/></linearGradient>
<symbol id="th_chrome" viewBox="0 0 52 52"><rect width="52" height="52" fill="url(#tbg)"/><circle cx="26" cy="27" r="21" fill="#989898"/><path d="M5.3 28A20.7 20.7 0 0 1 46.7 28Z" fill="#808080"/><path d="M8 24Q26 16 44 24Q42 33 26 34Q10 33 8 24Z" fill="#2c2c2c"/><path d="M13 24Q26 20 39 24Q36 29 26 30Q16 29 13 24Z" fill="#4a4a4a"/><path d="M11.5 22.5A15 15 0 0 1 20.9 12.9" fill="none" stroke="#fafafa" stroke-width="7.5" stroke-linecap="round"/><path d="M31.1 12.9A15 15 0 0 1 40.5 22.5" fill="none" stroke="#fafafa" stroke-width="7.5" stroke-linecap="round"/></symbol>
<symbol id="th_red" viewBox="0 0 52 52"><rect width="52" height="52" fill="url(#tbg)"/><ellipse cx="26" cy="26" rx="17" ry="20" fill="none" stroke="#b80c0c" stroke-width="8"/><ellipse cx="26" cy="26" rx="17" ry="20" fill="none" stroke="#e83030" stroke-width="2.5" stroke-dasharray="18 10"/><ellipse cx="25" cy="27" rx="9" ry="12" transform="rotate(15 25 27)" fill="none" stroke="#9a0a0a" stroke-width="4"/><ellipse cx="25" cy="27" rx="9" ry="12" transform="rotate(15 25 27)" fill="none" stroke="#f05050" stroke-width="1.2" stroke-dasharray="10 12"/><ellipse cx="25.5" cy="27" rx="5" ry="8" transform="rotate(15 25.5 27)" fill="#7c7c7c"/><path d="M13 12Q20 5 30 7" fill="none" stroke="#ffb0b0" stroke-width="1.6"/></symbol>
<symbol id="th_cloth" viewBox="0 0 52 52"><defs><linearGradient id="clg" x1="0" y1="0" x2="1" y2="0"><stop offset="0" stop-color="#bdbdbd"/><stop offset="0.4" stop-color="#d2d2d2"/><stop offset="1" stop-color="#b0b0b0"/></linearGradient></defs><rect width="52" height="52" fill="url(#tbg)"/><path d="M6 9Q26 4 46 9L47 44Q43 47 39 44L36 52H30Q26 45 22 52H16Q14 45 9 47Q5 46 5 42Z" fill="url(#clg)"/><ellipse cx="26" cy="9" rx="20" ry="4.5" fill="#dcdcdc"/><path d="M15 14V44M27 14V46M37 14V44" stroke="#a8a8a8" stroke-width="1.5" opacity="0.7"/><path d="M24 52L26 48L28 52Z" fill="#222"/></symbol>
<symbol id="th_ring" viewBox="0 0 52 52"><rect width="52" height="52" fill="url(#tbg)"/><ellipse cx="26" cy="26" rx="18" ry="20" fill="none" stroke="#5a5a5a" stroke-width="8"/><ellipse cx="26" cy="26" rx="18" ry="20" fill="none" stroke="#d8d8d8" stroke-width="5"/><ellipse cx="26" cy="27" rx="10" ry="12" transform="rotate(15 26 27)" fill="none" stroke="#bdbdbd" stroke-width="3.5"/><ellipse cx="26" cy="27" rx="10" ry="12" transform="rotate(15 26 27)" fill="none" stroke="#444" stroke-width="0.8"/><ellipse cx="26.5" cy="27" rx="6" ry="8" transform="rotate(15 26.5 27)" fill="#8a8a8a"/><path d="M12 14Q20 5 32 7" fill="none" stroke="#fff" stroke-width="1.8"/></symbol>
<symbol id="th_blue" viewBox="0 0 52 52"><rect width="52" height="52" fill="url(#tbg)"/><circle cx="26" cy="27" r="21" fill="url(#blu)"/></symbol>
<symbol id="th_black" viewBox="0 0 52 52"><rect width="52" height="52" fill="url(#tbg)"/><path d="M8 10V44Q26 52 44 44V10Z" fill="#1c1c1c"/><ellipse cx="26" cy="10" rx="18" ry="5" fill="#333"/></symbol>
<symbol id="th_gray" viewBox="0 0 52 52"><rect width="52" height="52" fill="url(#tbg)"/><circle cx="26" cy="27" r="21" fill="url(#gsph)"/></symbol>
<symbol id="th_white" viewBox="0 0 52 52"><rect width="52" height="52" fill="url(#tbg)"/><path d="M6 7V46Q26 53 46 46V7Z" fill="url(#wcyl)"/><ellipse cx="26" cy="7" rx="20" ry="4.5" fill="#f4f4f4"/></symbol>
</defs></svg>
<div class="a" style="left:1233.6px;top:372.6px;width:60px;height:60.4px;border:1.5px solid #bdbdbd;background:#fff"></div>
<svg style="left:1113.9px;top:377px" width="52" height="52" viewBox="0 0 52 52"><use href="#th_chrome" width="52" height="52"/></svg>
<svg style="left:1237.5px;top:377px" width="52" height="52" viewBox="0 0 52 52"><use href="#th_red" width="52" height="52"/></svg>
<svg style="left:1299.5px;top:377px" width="52" height="52" viewBox="0 0 52 52"><use href="#th_chrome" width="52" height="52"/></svg>
<svg style="left:1361.1px;top:377px" width="52" height="52" viewBox="0 0 52 52"><use href="#th_cloth" width="52" height="52"/></svg>
<svg style="left:1423.1px;top:377px" width="52" height="52" viewBox="0 0 52 52"><use href="#th_ring" width="52" height="52"/></svg>
<svg style="left:1051.4px;top:439px" width="52" height="52" viewBox="0 0 52 52"><use href="#th_chrome" width="52" height="52"/></svg>
<svg style="left:1113.9px;top:439px" width="52" height="52" viewBox="0 0 52 52"><use href="#th_blue" width="52" height="52"/></svg>
<svg style="left:1175.9px;top:439px" width="52" height="52" viewBox="0 0 52 52"><use href="#th_black" width="52" height="52"/></svg>
<svg style="left:1237.5px;top:439px" width="52" height="52" viewBox="0 0 52 52"><use href="#th_gray" width="52" height="52"/></svg>
<svg style="left:1299.5px;top:439px" width="52" height="52" viewBox="0 0 52 52"><use href="#th_gray" width="52" height="52"/></svg>
<svg style="left:1361.1px;top:439px" width="52" height="52" viewBox="0 0 52 52"><use href="#th_gray" width="52" height="52"/></svg>
<svg style="left:1423.1px;top:439px" width="52" height="52" viewBox="0 0 52 52"><use href="#th_white" width="52" height="52"/></svg>

<div class="a" style="left:1110.5px;top:439.5px;width:306px;height:29.2px;border-radius:14.6px;background:#595959"></div>
<div class="t" style="left:1128.5px;top:446.5px;font-size:16px;font-weight:bold;color:#fff;letter-spacing:0.06px">Aluminum - Anodized Glossy (Red)</div>


<!-- Library -->
<svg style="left:1043px;top:529px" width="10" height="8" viewBox="0 0 10 8"><path d="M0 0H9.5L4.75 7.5Z" fill="#222"/></svg>
<div class="t" style="left:1060px;top:527.5px;font-size:13.8px;font-weight:bold;color:#333;letter-spacing:0.1px">Library</div>
<div class="a" style="left:1042.3px;top:553.2px;width:449px;height:25.4px;border:1.5px solid #8c8c8c;background:#f3f3f3"></div>
<div class="t" style="left:1046.5px;top:559px;font-size:16px;color:#888;letter-spacing:-0.1px">Search</div>
<svg style="left:1471px;top:559.5px" width="16" height="14" viewBox="0 0 16 14"><circle cx="6" cy="5.8" r="4.6" fill="#fff" stroke="#222" stroke-width="1.6"/><path d="M9.5 9.2L14.5 13.3" stroke="#222" stroke-width="2.6" stroke-linecap="round"/></svg>
<div class="a" style="left:1042.3px;top:589px;width:449.6px;height:35px;background:#dcdcdc"></div>
<div class="a" style="left:1080.2px;top:592.9px;width:169.2px;height:31px;background:#e3e3e3;border-right:1px solid #cfcfcf;border-left:1px solid #d5d5d5"></div>
<svg style="left:1036px;top:584px" width="60" height="46" viewBox="0 0 60 46"><g fill="none" stroke="#555" stroke-width="4.2"><path d="M13.8 21.5A12.3 12.3 0 0 1 35.5 16.8"/><path d="M37.5 26.5A12.3 12.3 0 0 1 16 31.5"/></g><path d="M29.5 18.1H36.4V10.8H40.6V22.3H29.5Z" fill="#555"/><path d="M12.2 26.8H22.5V31H16.4V37.8H12.2Z" fill="#555"/></svg>
<div class="t" style="left:1087px;top:602.5px;font-size:14px;color:#3c3c3c;letter-spacing:0.05px">Fusion 360 Appearances</div>
<svg style="left:1256.5px;top:602px" width="22" height="15" viewBox="0 0 22 15"><defs><linearGradient id="cld" x1="0" y1="0" x2="0" y2="1"><stop offset="0" stop-color="#dfe8f8"/><stop offset="1" stop-color="#9cb4dc"/></linearGradient></defs><path d="M3 14Q0.5 14 0.5 11Q0.5 8.3 3.5 8Q4 4 8 4Q10 0.8 14 1.5Q18 2.5 18 6.5Q21.5 7 21.5 10.5Q21.5 14 18 14Z" fill="url(#cld)" stroke="#6a7ea8" stroke-width="1"/></svg>
<div class="t" style="left:1283.5px;top:602.3px;font-size:14px;color:#3c3c3c;letter-spacing:-0.02px">My Appearances</div>
<div class="t" style="left:1401px;top:602.5px;font-size:14px;color:#3c3c3c;letter-spacing:-0.1px">Favorites</div>
<div class="t" style="left:1047.5px;top:643px;font-size:13.6px;color:#3c3c3c;letter-spacing:0.32px">Show downloadable materials</div>
<svg style="left:1259px;top:641px" width="17" height="16" viewBox="0 0 17 16"><defs><linearGradient id="cbx" x1="0" y1="0" x2="0" y2="1"><stop offset="0" stop-color="#d8d8d8"/><stop offset="1" stop-color="#f4f4f4"/></linearGradient></defs><rect x="0.7" y="0.7" width="15.3" height="14.6" rx="2.5" fill="url(#cbx)" stroke="#555" stroke-width="1.3"/><path d="M4 8.5L7 12L12.5 2.5" fill="none" stroke="#111" stroke-width="1.6"/></svg>
<div class="t" style="left:1354.5px;top:642.5px;font-size:14.5px;color:#bdbdbd;letter-spacing:0.12px">Cancel all Downlo...</div>
<!-- inner scrollbar -->
<div class="a" style="left:1482.6px;top:674px;width:9px;height:118px;border-radius:4px 4px 0 0;background:linear-gradient(180deg,#8f8f8f 0px,#8f8f8f 38px,#bdbdbd 38px)"></div>
<svg style="left:1042px;top:682.2px" width="18" height="15" viewBox="0 0 18 15"><defs><linearGradient id="fg0" x1="0" y1="0" x2="0" y2="1"><stop offset="0" stop-color="#f8f8f8"/><stop offset="1" stop-color="#d8dce4"/></linearGradient></defs><path d="M0.6 1.2H6.5L7.5 2.7H17.4V14.4H0.6Z" fill="url(#fg0)" stroke="#555" stroke-width="1.1"/><path d="M0.6 3.5H17.4" stroke="#888" stroke-width="0.7"/></svg>
<div class="t" style="left:1067px;top:681.8px;font-size:14px;color:#3c3c3c;letter-spacing:0.2px">Fabric</div>
<svg style="left:1042px;top:712.0px" width="18" height="15" viewBox="0 0 18 15"><defs><linearGradient id="fg1" x1="0" y1="0" x2="0" y2="1"><stop offset="0" stop-color="#f8f8f8"/><stop offset="1" stop-color="#d8dce4"/></linearGradient></defs><path d="M0.6 1.2H6.5L7.5 2.7H17.4V14.4H0.6Z" fill="url(#fg1)" stroke="#555" stroke-width="1.1"/><path d="M0.6 3.5H17.4" stroke="#888" stroke-width="0.7"/></svg>
<div class="t" style="left:1067px;top:711.6px;font-size:14px;color:#3c3c3c;letter-spacing:0.2px">Glass</div>
<svg style="left:1042px;top:741.8px" width="18" height="15" viewBox="0 0 18 15"><defs><linearGradient id="fg2" x1="0" y1="0" x2="0" y2="1"><stop offset="0" stop-color="#f8f8f8"/><stop offset="1" stop-color="#d8dce4"/></linearGradient></defs><path d="M0.6 1.2H6.5L7.5 2.7H17.4V14.4H0.6Z" fill="url(#fg2)" stroke="#555" stroke-width="1.1"/><path d="M0.6 3.5H17.4" stroke="#888" stroke-width="0.7"/></svg>
<div class="t" style="left:1067px;top:741.4px;font-size:14px;color:#3c3c3c;letter-spacing:0.2px">Leather and Cloth</div>
<svg style="left:1042px;top:771.6px" width="18" height="15" viewBox="0 0 18 15"><defs><linearGradient id="fg3" x1="0" y1="0" x2="0" y2="1"><stop offset="0" stop-color="#f8f8f8"/><stop offset="1" stop-color="#d8dce4"/></linearGradient></defs><path d="M0.6 1.2H6.5L7.5 2.7H17.4V14.4H0.6Z" fill="url(#fg3)" stroke="#555" stroke-width="1.1"/><path d="M0.6 3.5H17.4" stroke="#888" stroke-width="0.7"/></svg>
<div class="t" style="left:1067px;top:771.2px;font-size:14px;color:#3c3c3c;letter-spacing:0.2px">Liquid</div>

<div class="a" style="left:1031px;top:790.8px;width:497px;height:1.2px;background:#d0d0d0"></div>
<div class="a" style="left:1031px;top:792px;width:497px;height:41px;background:#f3f3f3"></div>
<svg style="left:1046.5px;top:804.5px" width="16" height="16" viewBox="0 0 16 16"><circle cx="8" cy="8" r="7.5" fill="#111"/><circle cx="8" cy="4.2" r="1.3" fill="#fff"/><path d="M6 6.8H9V11.5H10.3V12.6H5.7V11.5H7V7.9H6Z" fill="#fff"/></svg>
<div class="a" style="left:1444.7px;top:801.2px;width:71px;height:22.3px;background:#e8e8e8;border:1px solid #c4c4c4"></div>
<div class="t" style="left:1460.5px;top:805.5px;font-size:15.2px;color:#777;letter-spacing:-0.1px">Close</div>

<!-- ===== BOTTOM BAR ===== -->
<div class="a" style="left:0;top:825px;width:1536px;height:29px;background:#f1f1f1;border-top:1px solid #dedede;border-bottom:2px solid #d4d4d4"></div>


<svg style="left:7.5px;top:835px" width="11" height="11" viewBox="0 0 11 11"><rect x="0.3" y="0.3" width="10" height="10" rx="4" fill="#222"/><path d="M5.3 2.3V8.3M2.3 5.3H8.3" stroke="#ccc" stroke-width="1.3"/></svg>
<div class="t" style="left:30px;top:833px;font-size:13.2px;color:#666;letter-spacing:-0.68px">RENDERING GALLERY</div>
</body></html>
